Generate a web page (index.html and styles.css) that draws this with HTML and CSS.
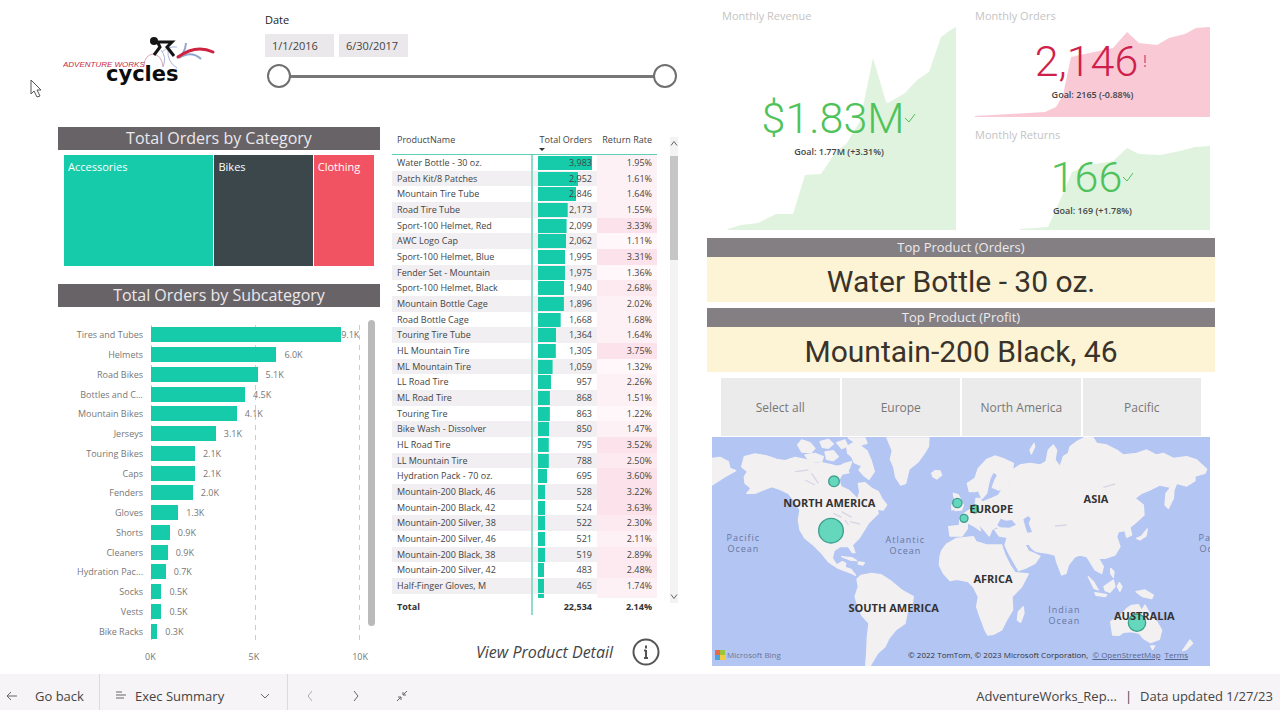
FILE: index.html
```html
<!DOCTYPE html>
<html lang="en">
<head>
    <meta charset="UTF-8">
    <meta name="viewport" content="width=device-width, initial-scale=1.0">
    <title>Exec Summary</title>
    <link rel="stylesheet" href="styles.css">
</head>
<body>
    <main class="report">
        <div class="left">
            <header class="top">
                <svg class="logo" viewBox="0 0 156 56" role="img" aria-label="Adventure Works Cycles">
                    <path d="M81 34q1-10 9-11q9 1 10 13" fill="none" stroke="#d9a6b4"/>
                    <path d="M98 19q6 7 2 17M105 19q-1 12 9 18M99 21q6-6 15-5" fill="none" stroke="#a9b4dc"/>
                    <circle cx="91" cy="10" r="4" fill="#151515"/>
                    <path d="M94 11h15l-5 5 7 9M95 12l2 4-6 8" fill="none" stroke="#151515" stroke-width="3"/>
                    <path d="M114 26q8-2 9-14" fill="none" stroke="#93a4d0" stroke-width="2"/>
                    <path d="M116 27q12-8 22 1" fill="none" stroke="#8ea6cf" stroke-width="2"/>
                    <path d="M115 26q18-13 35-5" fill="none" stroke="#cf2240" stroke-width="3" stroke-linecap="round"/>
                    <text x="0" y="36" class="logo-small">ADVENTURE WORKS</text>
                    <text x="43" y="50" class="logo-big">cycles</text>
                </svg>
                <fieldset class="slicer">
                    <legend>Date</legend>
                    <div class="dates">
                        <input type="text" value="1/1/2016" aria-label="Start date">
                        <input type="text" value="6/30/2017" aria-label="End date">
                    </div>
                    <div class="range">
                        <input type="range" min="0" max="100" value="0" aria-label="Range start">
                        <input type="range" min="0" max="100" value="100" aria-label="Range end">
                    </div>
                </fieldset>
            </header>

            <div class="charts">
                <section>
                    <h2 class="title">Total Orders by Category</h2>
                    <div class="treemap">
                        <div class="accessories">Accessories</div>
                        <div class="bikes">Bikes</div>
                        <div class="clothing">Clothing</div>
                    </div>
                    <h2 class="title">Total Orders by Subcategory</h2>
                    <div class="barchart">
                        <div class="names">
                            <span>Tires and Tubes</span>
                            <span>Helmets</span>
                            <span>Road Bikes</span>
                            <span>Bottles and C...</span>
                            <span>Mountain Bikes</span>
                            <span>Jerseys</span>
                            <span>Touring Bikes</span>
                            <span>Caps</span>
                            <span>Fenders</span>
                            <span>Gloves</span>
                            <span>Shorts</span>
                            <span>Cleaners</span>
                            <span>Hydration Pac...</span>
                            <span>Socks</span>
                            <span>Vests</span>
                            <span>Bike Racks</span>
                        </div>
                        <div class="plot">
                            <div class="row full"><i style="width:91%"></i>9.1K</div>
                            <div class="row"><i style="width:60%"></i>6.0K</div>
                            <div class="row"><i style="width:51%"></i>5.1K</div>
                            <div class="row"><i style="width:45%"></i>4.5K</div>
                            <div class="row"><i style="width:41%"></i>4.1K</div>
                            <div class="row"><i style="width:31%"></i>3.1K</div>
                            <div class="row"><i style="width:21%"></i>2.1K</div>
                            <div class="row"><i style="width:21%"></i>2.1K</div>
                            <div class="row"><i style="width:20%"></i>2.0K</div>
                            <div class="row"><i style="width:13%"></i>1.3K</div>
                            <div class="row"><i style="width:9%"></i>0.9K</div>
                            <div class="row"><i style="width:8%"></i>0.9K</div>
                            <div class="row"><i style="width:7%"></i>0.7K</div>
                            <div class="row"><i style="width:5%"></i>0.5K</div>
                            <div class="row"><i style="width:5%"></i>0.5K</div>
                            <div class="row"><i style="width:3%"></i>0.3K</div>
                        </div>
                        <div class="bar-scroll"></div>
                        <div class="axis"><span>0K</span><span>5K</span><span>10K</span></div>
                    </div>
                </section>

                <section>
                    <div class="table-wrap">
                        <table class="products">
                            <thead>
                                <tr><th>ProductName</th><th>Total Orders<b class="sort"></b></th><th>Return Rate</th></tr>
                            </thead>
                            <tbody>
                                <tr><td>Water Bottle - 30 oz.</td><td><span style="background-size:100% 14px">3,983</span></td><td class="r2">1.95%</td></tr>
                                <tr><td>Patch Kit/8 Patches</td><td><span style="background-size:74% 14px">2,952</span></td><td class="r2">1.61%</td></tr>
                                <tr><td>Mountain Tire Tube</td><td><span style="background-size:71% 14px">2,846</span></td><td class="r2">1.64%</td></tr>
                                <tr><td>Road Tire Tube</td><td><span style="background-size:55% 14px">2,173</span></td><td class="r2">1.55%</td></tr>
                                <tr><td>Sport-100 Helmet, Red</td><td><span style="background-size:53% 14px">2,099</span></td><td class="r4">3.33%</td></tr>
                                <tr><td>AWC Logo Cap</td><td><span style="background-size:52% 14px">2,062</span></td><td class="r1">1.11%</td></tr>
                                <tr><td>Sport-100 Helmet, Blue</td><td><span style="background-size:50% 14px">1,995</span></td><td class="r4">3.31%</td></tr>
                                <tr><td>Fender Set - Mountain</td><td><span style="background-size:50% 14px">1,975</span></td><td class="r1">1.36%</td></tr>
                                <tr><td>Sport-100 Helmet, Black</td><td><span style="background-size:49% 14px">1,940</span></td><td class="r3">2.68%</td></tr>
                                <tr><td>Mountain Bottle Cage</td><td><span style="background-size:48% 14px">1,896</span></td><td class="r2">2.02%</td></tr>
                                <tr><td>Road Bottle Cage</td><td><span style="background-size:42% 14px">1,668</span></td><td class="r2">1.68%</td></tr>
                                <tr><td>Touring Tire Tube</td><td><span style="background-size:34% 14px">1,364</span></td><td class="r2">1.64%</td></tr>
                                <tr><td>HL Mountain Tire</td><td><span style="background-size:33% 14px">1,305</span></td><td class="r4">3.75%</td></tr>
                                <tr><td>ML Mountain Tire</td><td><span style="background-size:27% 14px">1,059</span></td><td class="r1">1.32%</td></tr>
                                <tr><td>LL Road Tire</td><td><span style="background-size:24% 14px">957</span></td><td class="r2">2.26%</td></tr>
                                <tr><td>ML Road Tire</td><td><span style="background-size:22% 14px">868</span></td><td class="r2">1.51%</td></tr>
                                <tr><td>Touring Tire</td><td><span style="background-size:22% 14px">863</span></td><td class="r1">1.22%</td></tr>
                                <tr><td>Bike Wash - Dissolver</td><td><span style="background-size:21% 14px">850</span></td><td class="r2">1.47%</td></tr>
                                <tr><td>HL Road Tire</td><td><span style="background-size:20% 14px">795</span></td><td class="r4">3.52%</td></tr>
                                <tr><td>LL Mountain Tire</td><td><span style="background-size:20% 14px">788</span></td><td class="r3">2.50%</td></tr>
                                <tr><td>Hydration Pack - 70 oz.</td><td><span style="background-size:17% 14px">695</span></td><td class="r4">3.60%</td></tr>
                                <tr><td>Mountain-200 Black, 46</td><td><span style="background-size:13% 14px">528</span></td><td class="r4">3.22%</td></tr>
                                <tr><td>Mountain-200 Black, 42</td><td><span style="background-size:13% 14px">524</span></td><td class="r4">3.63%</td></tr>
                                <tr><td>Mountain-200 Silver, 38</td><td><span style="background-size:13% 14px">522</span></td><td class="r3">2.30%</td></tr>
                                <tr><td>Mountain-200 Silver, 46</td><td><span style="background-size:13% 14px">521</span></td><td class="r2">2.11%</td></tr>
                                <tr><td>Mountain-200 Black, 38</td><td><span style="background-size:13% 14px">519</span></td><td class="r3">2.89%</td></tr>
                                <tr><td>Mountain-200 Silver, 42</td><td><span style="background-size:12% 14px">483</span></td><td class="r3">2.48%</td></tr>
                                <tr><td>Half-Finger Gloves, M</td><td><span style="background-size:12% 14px">465</span></td><td class="r2">1.74%</td></tr>
                                <tr class="cut"><td></td><td><span style="background-size:11% 14px"></span></td><td class="r2"></td></tr>
                            </tbody>
                            <tfoot>
                                <tr><td>Total</td><td>22,534</td><td>2.14%</td></tr>
                            </tfoot>
                        </table>
                        <div class="table-scroll">
                            <svg viewBox="0 0 8 8"><path d="M1 6l3-4 3 4"/></svg>
                            <div class="thumb"></div>
                            <svg viewBox="0 0 8 8"><path d="M1 2l3 4 3-4"/></svg>
                        </div>
                    </div>
                    <div class="detail">
                        <a href="#">View Product Detail</a>
                        <button type="button" aria-label="Information">
                            <svg viewBox="0 0 28 28"><circle cx="14" cy="14" r="12.5"/><path d="M14 12v8M14 7.500v3M12 12.500h2M12 20h4"/></svg>
                        </button>
                    </div>
                </section>
            </div>
        </div>

        <div class="right">
            <div class="kpis">
                <section class="kpi tall good">
                    <h3>Monthly Revenue</h3>
                    <svg class="area" viewBox="0 0 234 203" preserveAspectRatio="none"><path d="M6 202L19 198 36 196 54 187 71 187 83 148 99 147 113 126 125 116 138 94 151 31 164 75 166 76 183 66 195 53 207 45 219 10 227 4 234 0V203H6z"/></svg>
                    <div class="figures">
                        <div class="value">$1.83M<svg viewBox="0 0 12 12"><path d="M1 6l4 4 6-8"/></svg></div>
                        <div class="goal">Goal: 1.77M (+3.31%)</div>
                    </div>
                </section>
                <section class="kpi bad">
                    <h3>Monthly Orders</h3>
                    <svg class="area" viewBox="0 0 235 90" preserveAspectRatio="none"><path d="M0 89L35 87 70 85 81 80 88 68 96 30 119 25 138 21 152 5 164 16 182 18 194 11 210 7 221 1 235 0V90H0z"/></svg>
                    <div class="figures">
                        <div class="value">2,146<svg viewBox="0 0 12 12"><path d="M7 0v8M7 10v2"/></svg></div>
                        <div class="goal">Goal: 2165 (-0.88%)</div>
                    </div>
                </section>
                <section class="kpi good">
                    <h3>Monthly Returns</h3>
                    <svg class="area" viewBox="0 0 235 83" preserveAspectRatio="none"><path d="M45 82L73 80 84 56 97 26 112 19 138 15 152 2 164 8 185 9 205 5 220 1 235 0V83H45z"/></svg>
                    <div class="figures">
                        <div class="value">166<svg viewBox="0 0 12 12"><path d="M1 6l4 4 6-8"/></svg></div>
                        <div class="goal">Goal: 169 (+1.78%)</div>
                    </div>
                </section>
            </div>

            <section class="banner">
                <h2>Top Product (Orders)</h2>
                <p>Water Bottle - 30 oz.</p>
            </section>
            <section class="banner">
                <h2>Top Product (Profit)</h2>
                <p>Mountain-200 Black, 46</p>
            </section>

            <div class="regions">
                <button type="button">Select all</button>
                <button type="button">Europe</button>
                <button type="button">North America</button>
                <button type="button">Pacific</button>
            </div>

            <div class="map">
                <svg class="world" viewBox="0 0 1494 687" preserveAspectRatio="xMidYMid slice">
                    <g class="land" transform="translate(-21 -21)">
                        <path d="M21 85L45 82 70 95 75 115 92 122 60 140 45 150 21 165z"/>
                        <path d="M118 80L150 72 185 78 215 88 240 92 270 82 300 88 330 100 350 98 380 105 400 110 420 100 440 95 432 118 412 130 402 150 408 170 430 180 446 195 458 208 464 185 460 160 480 158 500 175 520 185 530 205 545 225 535 240 515 238 520 250 505 265 490 280 478 300 462 325 442 345 450 368 442 368 430 350 405 350 387 362 382 385 395 405 412 395 422 400 420 412 438 418 452 436 440 430 400 415 370 395 350 370 325 345 300 325 285 300 280 270 285 240 270 215 250 190 225 178 200 170 175 180 150 190 125 190 138 175 120 160 118 140 128 125 110 110z"/>
                        <path d="M278 45L290 30 315 38 330 55 318 68 290 66zM300 75L330 70 355 80 350 95 315 96zM345 35L370 28 385 42 370 55 352 52zM360 66L385 62 400 80 385 92 365 88zM395 38L420 30 428 48 410 56z"/>
                        <path d="M425 50L448 36 470 50 486 62 498 90 508 125 492 148 478 138 462 120 470 108 448 98 440 80 428 70zM398 108L420 108 432 128 412 132zM430 24L480 24 486 40 462 46z"/>
                        <path d="M546 24L672 24 670 50 658 70 640 95 612 118 602 160 587 165 572 142 566 110 556 88 562 62z"/>
                        <path d="M680 130L690 122 705 123 710 136 695 147 684 140z"/>
                        <path d="M410 380L440 383 455 392 435 390zM460 396L478 398 474 405 460 402z"/>
                        <path d="M468 436L500 430 530 435 560 455 590 480 625 500 622 520 606 550 600 580 572 600 552 625 540 650 518 670 506 690 494 710 482 708 485 670 487 620 492 580 470 556 456 520 450 500 460 470 456 448z"/>
                        <path d="M745 190L760 195 775 225 770 240 750 242 752 225z"/>
                    </g>
                    <g class="land" transform="translate(744 -21)">
                        <path d="M22 160L45 145 55 115 80 88 105 78 130 86 160 100 158 118 140 125 150 140 140 175 115 180 97 172 105 150 113 135 100 125 90 145 85 165 80 190 66 206 55 182 45 185 28 185z"/>
                        <path d="M140 128L165 115 180 105 210 100 240 105 258 95 265 60 280 45 290 60 285 90 300 110 310 80 325 70 330 50 350 35 375 22 400 24 410 40 440 45 470 60 490 75 530 70 560 60 590 75 610 70 640 85 680 80 710 90 740 118 735 130 705 138 705 152 680 168 650 160 642 180 640 205 625 235 615 225 618 190 632 172 600 165 570 180 545 190 525 205 550 225 552 255 525 280 510 292 515 315 500 322 495 302 475 305 470 320 480 350 465 375 435 385 415 385 430 410 425 430 405 420 390 395 380 380 360 375 345 380 325 405 318 430 305 435 290 395 285 375 265 370 230 365 200 345 210 365 240 378 225 400 195 415 175 422 150 380 135 345 142 322 118 318 105 300 120 295 110 290 95 300 88 318 74 302 52 278 62 302 45 290 22 278 22 296 6 318-30 318-34 290-2 286 0 260 20 245 45 230 48 205 60 205 66 216 95 205 115 196 125 180 150 160z"/>
                        <path d="M-60 380L-55 362-40 342-10 325 40 320 48 335 80 345 125 345 135 375 150 405 165 428 205 432 185 470 156 500 158 540 140 570 125 600 100 613 83 615 75 600 60 560 50 530 55 500 40 470 25 455-10 448-30 452-50 430-62 405z"/>
                        <path d="M175 545L190 530 192 550 182 577 172 570zM385 440L400 455 415 480 402 475zM405 488L440 494 436 500 408 496zM432 470L460 450 465 470 450 487 436 482zM528 485L555 480 580 495 575 506 548 500zM452 415L462 425 460 442 452 430zM530 325L545 318 562 297 558 318 540 330zM478 458L486 470 480 484 472 470z"/>
                        <path d="M452 575L480 558 500 536 515 526 535 524 545 542 555 525 570 552 590 575 605 600 598 628 572 638 550 625 538 610 515 605 490 607 478 616 458 615 455 595zM572 648L584 648 578 658zM690 630L698 640 680 658 668 662z"/>
                        <path d="M210 60L222 40 224 50 214 72zM-25 225L-15 220-12 235-24 240z"/>
                    </g>
                    <g class="water" transform="translate(744 -21)">
                        <path d="M112 286L122 266 138 272 155 270 168 284 148 293 120 292zM190 268L205 258 212 266 206 280 216 306 202 308 196 290zM128 352L136 356 174 422 168 424zM198 345L206 345 218 362 208 364z"/>
                    </g>
                    <g class="lakes" transform="translate(-21 -21)">
                        <path d="M270 125L310 120M300 150L330 165M320 130L340 160M385 250L410 262M420 270L430 285M435 275L465 282M410 245L440 262"/>
                        <path d="M1195 172L1230 162M1050 288L1085 285"/>
                    </g>
                    <g class="places">
                        <text x="352" y="210">NORTH AMERICA</text>
                        <text x="545" y="525">SOUTH AMERICA</text>
                        <text x="1152" y="199">ASIA</text>
                        <text x="843" y="438">AFRICA</text>
                    </g>
                    <g class="pins">
                        <circle cx="357" cy="281" r="37"/>
                        <circle cx="366" cy="133" r="16"/>
                        <circle cx="736" cy="198" r="14"/>
                        <circle cx="756" cy="244" r="12"/>
                        <circle cx="788" cy="216" r="12"/>
                        <circle cx="1275" cy="557" r="26"/>
                    </g>
                    <g class="places">
                        <text x="838" y="227">EUROPE</text>
                        <text x="1297" y="549">AUSTRALIA</text>
                    </g>
                    <g class="oceans">
                        <text x="94" y="312">Pacific</text><text x="94" y="345">Ocean</text>
                        <text x="580" y="318">Atlantic</text><text x="580" y="352">Ocean</text>
                        <text x="1057" y="528">Indian</text><text x="1057" y="562">Ocean</text>
                        <text x="1510" y="312">Pacific</text><text x="1510" y="345">Ocean</text>
                    </g>
                </svg>
                <div class="credits">
                    <span class="bing">
                        <svg viewBox="0 0 10 10"><path fill="#e8694a" d="M0 0h5v5H0z"/><path fill="#9cc53b" d="M5 0h5v5H5z"/><path fill="#4aa5dd" d="M0 5h5v5H0z"/><path fill="#f2cb45" d="M5 5h5v5H5z"/></svg>
                        Microsoft Bing
                    </span>
                    <span>© 2022 TomTom, © 2023 Microsoft Corporation, <a href="#">© OpenStreetMap</a> <a href="#">Terms</a></span>
                </div>
            </div>
        </div>
    </main>

    <footer class="nav">
        <button type="button" class="back">
            <svg viewBox="0 0 12 12"><path d="M11 6H1M5 2L1 6l4 4"/></svg>
            Go back
        </button>
        <button type="button" class="page">
            <svg viewBox="0 0 12 12"><path d="M1 2h6M1 5h10M1 8h8"/></svg>
            Exec Summary
            <svg class="down" viewBox="0 0 12 12"><path d="M2 4l4 4 4-4"/></svg>
        </button>
        <div class="pager">
            <button type="button" class="off" aria-label="Previous page"><svg viewBox="0 0 12 12"><path d="M8 1L4 6l4 5"/></svg></button>
            <button type="button" aria-label="Next page"><svg viewBox="0 0 12 12"><path d="M4 1l4 5-4 5"/></svg></button>
            <button type="button" aria-label="Exit full screen"><svg viewBox="0 0 12 12"><path d="M11 1L7 5M7 2v3h3M1 11l4-4M2 7h3v3"/></svg></button>
        </div>
        <div class="status"><span>AdventureWorks_Rep...</span><span>|</span><span>Data updated 1/27/23</span></div>
    </footer>

    <svg class="cursor" viewBox="0 0 12 19"><path d="M1 1v14l3-3 3 6 3-1-3-6h4z"/></svg>
</body>
</html>
```
FILE: styles.css
```css
* {
    margin: 0;
    padding: 0;
    box-sizing: border-box;
}
body {
    background: #fff;
    color: #444;
    font-family: "Open Sans", "Noto Sans", sans-serif;
    font-size: 12px;
}
button, input {
    font: inherit;
    color: inherit;
    border: 0;
    background: none;
}
a {
    color: inherit;
}
.report {
    display: grid;
    grid-template-columns: 624fr 508fr;
    gap: 25px;
    padding: 0 65px 0 58px;
}

/* header */
.top {
    display: flex;
    height: 127px;
}
.logo {
    width: 156px;
    height: 56px;
    margin: 31px 51px 0 5px;
}
.logo-small {
    font: italic 8px "Liberation Sans", sans-serif;
    fill: #c92a48;
}
.logo-big {
    font: bold 21px "DejaVu Sans", sans-serif;
    fill: #0c0c0c;
}
.slicer {
    flex: 1;
    margin: 0 5px 0 -5px;
    padding-top: 12px;
    border: 0;
}
.slicer legend {
    float: left;
    width: 100%;
    font-size: 11px;
    line-height: 16px;
    color: #222;
}
.dates {
    display: flex;
    gap: 5px;
    width: 100%;
    padding-top: 6px;
}
.dates input {
    width: 69px;
    height: 23px;
    padding: 0 7px;
    background: #eae8ea;
    font-size: 11px;
}
.range {
    display: grid;
    margin: 7px 0 0 2px;
    background: linear-gradient(#777, #777) no-repeat center / 96% 3px;
}
.range input {
    grid-area: 1 / 1;
    width: 100%;
    height: 24px;
    appearance: none;
    pointer-events: none;
}
.range input::-webkit-slider-thumb {
    appearance: none;
    width: 24px;
    height: 24px;
    border: 2px solid #707070;
    border-radius: 50%;
    background: #fff;
    pointer-events: auto;
}

/* left charts */
.charts {
    display: grid;
    grid-template-columns: 322fr 290fr;
    gap: 12px;
}
.title {
    height: 23px;
    line-height: 23px;
    background: #676367;
    color: #ece8ec;
    font-size: 16px;
    font-weight: normal;
    text-align: center;
}
.treemap {
    display: grid;
    grid-template-columns: 149fr 98fr 60fr;
    gap: 1px;
    height: 111px;
    margin: 5px 6px 18px;
    color: #fff;
    font-size: 11px;
}
.treemap div {
    padding: 4px;
    line-height: 15px;
}
.accessories {
    background: #15cbaa;
}
.bikes {
    background: #3b474b;
}
.clothing {
    background: #f25362;
}
.barchart {
    display: grid;
    grid-template-columns: 85fr 209fr 7px;
    column-gap: 8px;
    margin: 13px 5px 0 0;
    font-size: 9px;
    color: #777;
}
.names, .plot {
    display: grid;
    grid-auto-rows: 1fr;
    height: 325px;
    padding: 5px 0 4px;
}
.names span {
    display: flex;
    align-items: center;
    justify-content: flex-end;
    white-space: nowrap;
}
.plot {
    background:
        repeating-linear-gradient(#fff 0 5px, transparent 5px 10px),
        linear-gradient(#ccc, #ccc) no-repeat left / 1px,
        linear-gradient(#ccc, #ccc) no-repeat center / 1px,
        linear-gradient(#ccc, #ccc) no-repeat right / 1px;
}
.row {
    display: flex;
    align-items: center;
    gap: 8px;
}
.row.full {
    gap: 0;
}
.row i {
    flex: none;
    height: 15px;
    background: #15cbaa;
}
.bar-scroll {
    height: 306px;
    border-radius: 4px;
    background: #bababa;
}
.axis {
    grid-column: 2;
    display: flex;
    justify-content: space-between;
    margin: 5px -8px 0 -6px;
    line-height: 14px;
}

/* product table */
.table-wrap {
    display: flex;
    gap: 13px;
}
.products {
    flex: 1;
    height: 488px;
    border-spacing: 0;
    table-layout: fixed;
    font-size: 9px;
    line-height: 12px;
    white-space: nowrap;
}
.products th {
    height: 28px;
    padding: 7px 5px 0;
    border-bottom: 1px solid #5fcfb6;
    font-weight: normal;
    text-align: right;
    vertical-align: top;
}
.products th:nth-child(2) {
    width: 64px;
}
.products th:nth-child(3) {
    width: 60px;
}
.products th:first-child {
    text-align: left;
}
.products th:not(:first-child) {
    padding-left: 0;
}
.sort {
    display: block;
    width: 0;
    margin: 2px 0 0 6px;
    border: 3px solid transparent;
    border-top-color: #333;
    border-bottom: 0;
}
.products td {
    padding: 0 5px;
    text-align: right;
}
.products td:first-child {
    border-right: 2px solid #8fdccb;
    text-align: left;
}
.products td span {
    display: block;
    line-height: 14px;
    background: linear-gradient(#15cbaa, #15cbaa) no-repeat left top;
}
.products tbody tr:nth-child(even) {
    background: #f1eff1;
}
.products .cut {
    height: 4px;
}
.cut span {
    height: 4px;
}
.products .r1 {
    background: #fff7f9;
}
.products .r2 {
    background: #fef1f5;
}
.products .r3 {
    background: #fdeaf0;
}
.products .r4 {
    background: #fce2ea;
}
.products tfoot td {
    height: 17px;
    font-weight: bold;
    color: #333;
}
.table-scroll {
    display: flex;
    flex-direction: column;
    width: 8px;
    margin: 10px 4px 12px 0;
    background: #f3f3f3;
}
.table-scroll svg {
    width: 8px;
    height: 13px;
    fill: none;
    stroke: #666;
}
.thumb {
    height: 104px;
    margin: 6px 0 auto;
    background: #c6c6c6;
}
.detail {
    display: flex;
    align-items: center;
    justify-content: flex-end;
    gap: 19px;
    height: 28px;
    margin: 23px 22px 1px 0;
}
.detail a {
    font-size: 16px;
    font-style: italic;
    text-decoration: none;
}
.detail button, .detail svg {
    display: block;
    width: 28px;
    height: 28px;
}
.detail svg {
    fill: none;
    stroke: #555;
    stroke-width: 2;
}

/* kpi cards */
.kpis {
    display: grid;
    grid-template-columns: 234fr 235fr;
    grid-template-rows: 109px 113px;
    column-gap: 19px;
    padding: 0 5px 0 15px;
    margin: 8px 0;
}
.kpi {
    display: grid;
    grid-template-rows: 19px 1fr;
}
.kpi.tall {
    grid-row: 1 / 3;
}
.kpi h3 {
    font-size: 11px;
    font-weight: normal;
    line-height: 16px;
    color: #c4c4c4;
}
.area, .figures {
    grid-area: 2 / 1;
    width: 100%;
    height: 100%;
}
.kpi:last-child {
    padding-top: 10px;
}
.good .area {
    fill: #dff3df;
}
.bad .area {
    fill: #f9c9d6;
}
.figures {
    display: flex;
    flex-direction: column;
    align-items: center;
    padding-top: 10px;
}
.tall .figures {
    padding-top: 67px;
}
.kpi:last-child .figures {
    padding-top: 7px;
}
.value {
    display: flex;
    align-items: center;
    font-family: Roboto, sans-serif;
    font-size: 43px;
    font-weight: 300;
    line-height: 48px;
}
.value svg {
    width: 12px;
    height: 12px;
    fill: none;
    stroke: currentColor;
}
.good .value {
    color: #4fc25a;
}
.bad .value {
    color: #cf1f4b;
}
.goal {
    margin-top: 3px;
    font-size: 9px;
    line-height: 14px;
    font-weight: 600;
}

/* top products */
.banner {
    margin-bottom: 6px;
    text-align: center;
}
.banner h2 {
    background: #837f82;
    color: #eeeaee;
    font-size: 13px;
    font-weight: normal;
    line-height: 19px;
}
.banner p {
    padding-top: 5px;
    background: #fdf4d5;
    color: #3a332b;
    font-family: Roboto, sans-serif;
    font-size: 30px;
    line-height: 40px;
}
.regions {
    display: grid;
    grid-template-columns: repeat(4, 1fr);
    gap: 2px;
    margin: 0 14px 1px;
}
.regions button {
    height: 58px;
    background: #ebebeb;
    color: #777;
    font-size: 12px;
}

/* map */
.map {
    position: relative;
    margin: 0 5px;
    background: #b3c5f3;
}
.world {
    display: block;
    width: 100%;
    height: 229px;
}
.land {
    fill: #f3f0f2;
    stroke: #f3f0f2;
    stroke-width: 4;
    stroke-linejoin: round;
}
.water {
    fill: #b3c5f3;
}
.lakes {
    fill: none;
    stroke: #d5d7e4;
    stroke-width: 4;
}
.pins {
    fill: #35cfab;
    fill-opacity: .75;
    stroke: #3d9f8d;
    stroke-width: 4;
}
.places {
    font-size: 33px;
    font-weight: bold;
    text-anchor: middle;
    fill: #333;
}
.oceans {
    font-size: 27px;
    letter-spacing: 3px;
    text-anchor: middle;
    fill: #67779f;
}
.credits {
    position: absolute;
    left: 3px;
    right: 22px;
    bottom: 5px;
    display: flex;
    justify-content: space-between;
    font-size: 8px;
    line-height: 13px;
    color: #333;
}
.credits a {
    margin-left: 2px;
    color: #56658c;
}
.bing {
    display: flex;
    align-items: center;
    gap: 2px;
    color: #6b7794;
}
.bing svg {
    width: 10px;
    height: 10px;
}

/* bottom bar */
.nav {
    display: flex;
    height: 36px;
    margin-top: 7px;
    background: #f6f4f7;
    font-size: 13px;
}
.nav svg {
    width: 12px;
    height: 12px;
    fill: none;
    stroke: #666;
}
.nav button {
    display: flex;
    align-items: center;
    padding-top: 8px;
}
.nav .back {
    width: 100px;
    gap: 17px;
    padding-left: 6px;
    border-right: 1px solid #dddbe0;
}
.nav .page {
    width: 188px;
    gap: 8px;
    padding-left: 15px;
    border-right: 1px solid #dddbe0;
}
.page .down {
    margin: 0 16px 0 auto;
}
.pager {
    display: flex;
    gap: 34px;
    padding-left: 16px;
}
.pager .off {
    opacity: .5;
}
.status {
    display: flex;
    align-items: center;
    gap: 8px;
    margin-left: auto;
    padding: 8px 7px 0 0;
}
.cursor {
    position: absolute;
    left: 30px;
    top: 79px;
    width: 12px;
    height: 19px;
    fill: #fff;
    stroke: #555;
}
```
